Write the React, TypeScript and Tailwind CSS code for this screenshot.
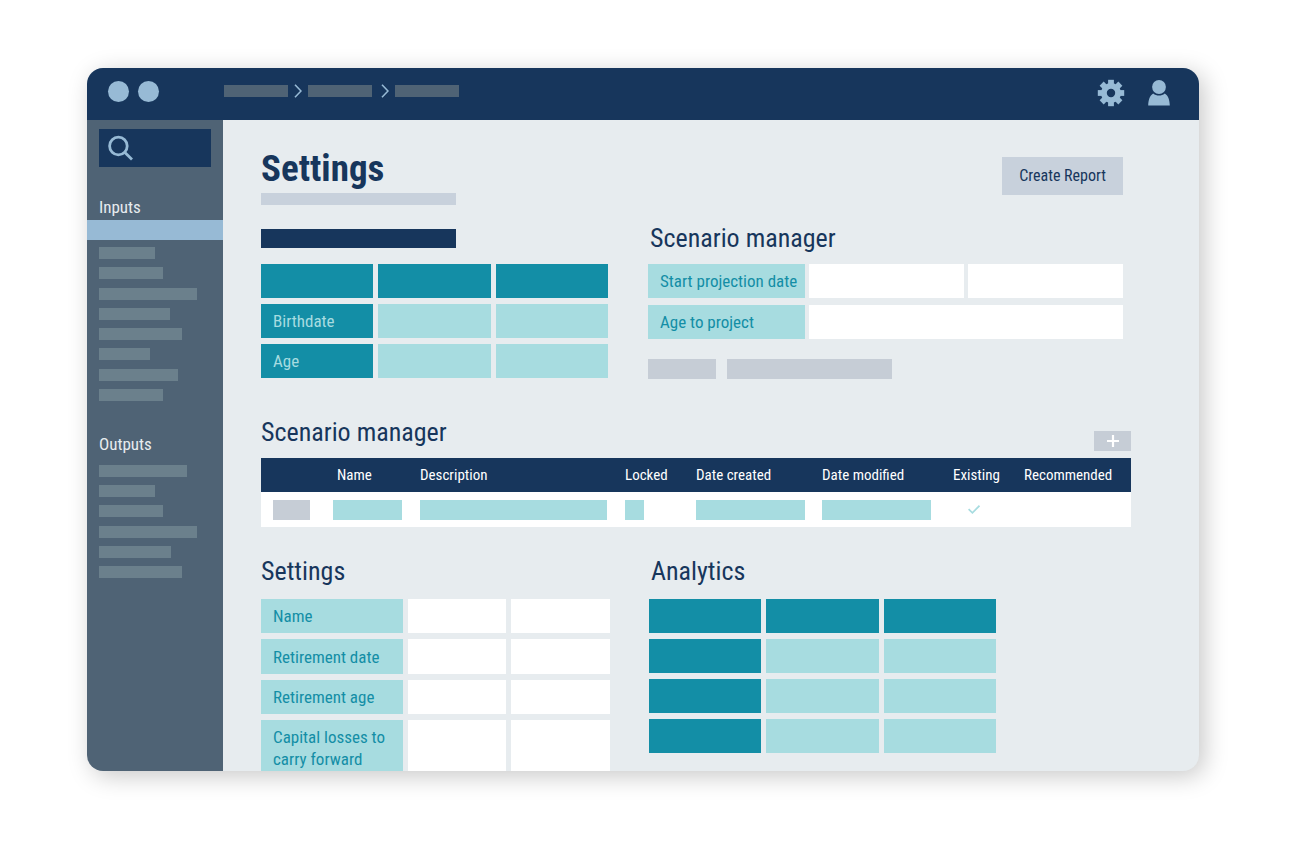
import { useState } from 'react';
import clsx from 'clsx';

const inputLinks = [
  { name: 'Assets', width: 'w-14' },
  { name: 'Income', width: 'w-16' },
  { name: 'Contributions', width: 'w-[98px]' },
  { name: 'Expenses', width: 'w-[71px]' },
  { name: 'Liabilities', width: 'w-[83px]' },
  { name: 'Taxes', width: 'w-[51px]' },
  { name: 'Insurance', width: 'w-[79px]' },
  { name: 'Estate', width: 'w-16' },
];

const outputLinks = [
  { name: 'Net worth', width: 'w-[88px]' },
  { name: 'Cash', width: 'w-14' },
  { name: 'Growth', width: 'w-16' },
  { name: 'Projections', width: 'w-[98px]' },
  { name: 'Savings', width: 'w-[72px]' },
  { name: 'Summary', width: 'w-[83px]' },
];

const scenarioColumns = [
  { title: '', col: 'w-[72px]', bar: 'ml-3 w-[37px] bg-[#c6cdd6]' },
  { title: 'Name', col: 'w-[87px]', bar: 'w-[69px] bg-[#a7dce0]' },
  { title: 'Description', col: 'w-[205px]', bar: 'w-[187px] bg-[#a7dce0]' },
  { title: 'Locked', col: 'w-[71px]', bar: 'w-[19px] bg-[#a7dce0]' },
  { title: 'Date created', col: 'w-[126px]', bar: 'w-[109px] bg-[#a7dce0]' },
  { title: 'Date modified', col: 'w-[131px]', bar: 'w-[109px] bg-[#a7dce0]' },
  { title: 'Existing', col: 'w-[71px]', check: true },
  { title: 'Recommended', col: 'w-[107px]' },
];

const settingsFields = [
  { id: 'name', label: 'Name' },
  { id: 'retirement-date', label: 'Retirement date' },
  { id: 'retirement-age', label: 'Retirement age' },
  { id: 'capital-losses', label: 'Capital losses to carry forward' },
];

function GearIcon() {
  return (
    <svg viewBox="0 0 28 28" className="size-7" fill="#97bad5" aria-hidden="true">
      <path
        fillRule="evenodd"
        d="M14 4a10 10 0 1 0 0 20a10 10 0 0 0 0-20zM14 9.8a4.2 4.2 0 1 1 0 8.4a4.2 4.2 0 0 1 0-8.4z"
      />
      {[0, 45, 90, 135, 180, 225, 270, 315].map((angle) => (
        <rect key={angle} x="11.1" y="0.8" width="5.8" height="5" transform={`rotate(${angle} 14 14)`} />
      ))}
    </svg>
  );
}

function UserIcon() {
  return (
    <svg viewBox="0 0 22 26" className="h-[26px] w-[22px]" fill="#97bad5" aria-hidden="true">
      <circle cx="11" cy="7" r="6.9" />
      <path d="M5.2 13.4C7 15 8.800 15.400 11 15.400s4-.4 5.800-2C20.300 15.600 21.700 20 21.800 25.400H.2C.3 20 1.700 15.600 5.200 13.400z" />
    </svg>
  );
}

function Chevron({ className }: { className: string }) {
  return (
    <svg viewBox="0 0 8 14" className={clsx('h-3.5 w-2', className)} fill="none" stroke="#97bad5" strokeWidth="1.6" aria-hidden="true">
      <path d="M1 0.8L7 7L1 13.2" />
    </svg>
  );
}

function LinkList({ links, className }: { links: typeof inputLinks; className: string }) {
  return (
    <ul className={clsx('flex flex-col justify-between pl-3', className)}>
      {links.map((link) => (
        <li key={link.name}>
          <a href="#" aria-label={link.name} className={clsx('block h-3 bg-[#6b808c]', link.width)} />
        </li>
      ))}
    </ul>
  );
}

function BlockTable({ rows }: { rows: string[] }) {
  return (
    <div className="-mx-[5px] -my-1.5">
      <table className="w-full table-fixed border-separate border-spacing-x-[5px] border-spacing-y-1.5 text-left text-[17px] leading-5">
        <thead>
          <tr>
            {[0, 1, 2].map((i) => (
              <th key={i} className="h-[34px] bg-[#138ea6] p-0" />
            ))}
          </tr>
        </thead>
        <tbody>
          {rows.map((label, i) => (
            <tr key={i}>
              <th className="h-[34px] bg-[#138ea6] py-0 pr-0 pl-3 font-normal text-[#a7dce0]">{label}</th>
              <td className="bg-[#a7dce0] p-0" />
              <td className="bg-[#a7dce0] p-0" />
            </tr>
          ))}
        </tbody>
      </table>
    </div>
  );
}

const labelStyle = 'flex items-center bg-[#a7dce0] pl-3 text-[17px] leading-[22px] text-[#138ea6]';
const inputStyle = 'w-full min-w-0 bg-white px-2 text-[17px] text-[#17365c] outline-none';
const headingStyle = 'text-[26px] leading-8 text-[#17365c]';

export default function App() {
  const [query, setQuery] = useState('');

  return (
    <div className="h-screen bg-white pt-[68px] pr-[102px] pb-20 pl-[87px] font-['Roboto_Condensed',Roboto,sans-serif]">
      <div className="flex h-full flex-col overflow-hidden rounded-2xl bg-[#e7ecef] shadow-[5px_5px_24px_rgba(0,0,0,0.22)]">
        {/* Title bar */}
        <header className="flex h-[52px] shrink-0 justify-between bg-[#17365c] pr-[29px] pl-[21px]">
          <div className="flex items-center pb-1.5">
            <div className="flex w-[116px] gap-[9px]">
              <span className="size-[21px] rounded-full bg-[#97bad5]" />
              <span className="size-[21px] rounded-full bg-[#97bad5]" />
            </div>
            <nav aria-label="Breadcrumb" className="flex items-center">
              <a href="#" aria-label="Home" className="h-3 w-16 bg-[#4f6375]" />
              <Chevron className="mx-1.5" />
              <a href="#" aria-label="Client" className="h-3 w-16 bg-[#4f6375]" />
              <Chevron className="mr-1.5 ml-[9px]" />
              <a href="#" aria-label="Settings" className="h-3 w-16 bg-[#4f6375]" />
            </nav>
          </div>
          <div className="flex items-center gap-[23px] pb-0.5">
            <button type="button" aria-label="Preferences">
              <GearIcon />
            </button>
            <button type="button" aria-label="Account">
              <UserIcon />
            </button>
          </div>
        </header>

        <div className="flex min-h-0 flex-1">
          {/* Sidebar */}
          <aside className="w-[136px] shrink-0 bg-[#4f6375] pt-[9px] text-[17px] leading-6 text-[#e7ecef]">
            <label className="mx-3 flex h-[38px] items-center bg-[#17365c] pl-2">
              <svg viewBox="0 0 26 26" className="size-[26px] shrink-0" fill="none" stroke="#97bad5" strokeWidth="2.8" aria-hidden="true">
                <circle cx="11.4" cy="11" r="8.8" />
                <path d="M17.4 17L25 24.4" />
              </svg>
              <input
                type="search"
                aria-label="Search"
                value={query}
                onChange={(e) => setQuery(e.target.value)}
                className="w-full min-w-0 bg-transparent px-2 text-sm outline-none"
              />
            </label>
            <h3 className="mt-7 pl-3">Inputs</h3>
            <a href="#" aria-label="Current page" className="mt-px block h-5 bg-[#97bad5]" />
            <LinkList links={inputLinks} className="mt-[7px] h-[154px]" />
            <h3 className="mt-[31px] pl-3">Outputs</h3>
            <LinkList links={outputLinks} className="mt-[9px] h-[113px]" />
          </aside>

          <main className="min-w-0 flex-1 overflow-hidden pt-7 pr-[68px] pl-[38px]">
            <div className="flex items-start justify-between pr-2">
              <div>
                <h1 className="pb-1 text-[37px] leading-[41px] font-bold text-[#17365c]">Settings</h1>
                <div className="h-3 w-[195px] bg-[#c8d1dc]" />
              </div>
              <button type="button" className="mt-[9px] h-[38px] bg-[#c8d1dc] px-[17px] text-base text-[#17365c]">
                Create Report
              </button>
            </div>

            <div className="mt-[17px] grid grid-cols-[347fr_475fr] gap-x-10 pr-2">
              <section className="pt-[7px]">
                <div className="mb-4 h-[19px] w-[195px] bg-[#17365c]" />
                <BlockTable rows={['Birthdate', 'Age']} />
              </section>

              <section>
                <h2 className={clsx(headingStyle, 'mb-[10px] pl-0.5')}>Scenario manager</h2>
                <div className="grid grid-cols-[157fr_155fr_155fr] gap-x-1 gap-y-[7px]">
                  <label htmlFor="start-date" className={clsx(labelStyle, 'h-[34px]')}>
                    Start projection date
                  </label>
                  <input id="start-date" className={inputStyle} />
                  <input aria-label="Start projection date, alternate" className={inputStyle} />
                  <label htmlFor="project-age" className={clsx(labelStyle, 'h-[34px]')}>
                    Age to project
                  </label>
                  <input id="project-age" className={clsx(inputStyle, 'col-span-2')} />
                </div>
                <div className="mt-5 flex gap-[11px]">
                  <button type="button" aria-label="Apply" className="h-5 w-[68px] bg-[#c6cdd6]" />
                  <button type="button" aria-label="Restore defaults" className="h-5 w-[165px] bg-[#c6cdd6]" />
                </div>
              </section>
            </div>

            <section className="mt-[37px]">
              <div className="flex items-start justify-between pb-[7px]">
                <h2 className={headingStyle}>Scenario manager</h2>
                <button type="button" aria-label="Add scenario" className="mt-[15px] flex h-5 w-[37px] items-center justify-center bg-[#c6cdd6]">
                  <svg viewBox="0 0 12 12" className="size-3" stroke="#fff" strokeWidth="2.2" aria-hidden="true">
                    <path d="M6 0v12M0 6h12" />
                  </svg>
                </button>
              </div>
              <table className="w-full table-fixed bg-white text-left">
                <colgroup>
                  {scenarioColumns.map((column) => (
                    <col key={column.title} className={column.col} />
                  ))}
                </colgroup>
                <thead className="h-[34px] bg-[#17365c] text-[15px] leading-5 text-white">
                  <tr>
                    {scenarioColumns.map((column) => (
                      <th key={column.title} className={clsx('p-0 font-normal', column.title === 'Name' && 'pl-1')}>
                        {column.title}
                      </th>
                    ))}
                  </tr>
                </thead>
                <tbody>
                  <tr className="h-[35px]">
                    {scenarioColumns.map((column) => (
                      <td key={column.title} className="p-0">
                        {column.bar && <div className={clsx('h-5', column.bar)} />}
                        {column.check && (
                          <svg viewBox="0 0 12 9" className="ml-[15px] h-[9px] w-3" fill="none" stroke="#a7dce0" strokeWidth="1.7" role="img" aria-label="Yes">
                            <path d="M0.6 4.2L4.4 7.8L11.5 0.7" />
                          </svg>
                        )}
                      </td>
                    ))}
                  </tr>
                </tbody>
              </table>
            </section>

            <div className="mt-7 grid grid-cols-[349fr_347fr] gap-x-[39px] pr-[135px]">
              <section>
                <h2 className={clsx(headingStyle, 'mb-3')}>Settings</h2>
                <div className="grid grid-cols-[142fr_99fr_99fr] grid-rows-[34px_35px_34px_56px] gap-x-[5px] gap-y-1.5">
                  {settingsFields.map((field) => (
                    <div key={field.id} className="contents">
                      <label htmlFor={field.id} className={labelStyle}>
                        {field.label}
                      </label>
                      <input id={field.id} className={inputStyle} />
                      <input aria-label={`${field.label}, alternate`} className={inputStyle} />
                    </div>
                  ))}
                </div>
              </section>

              <section>
                <h2 className={clsx(headingStyle, 'mb-3 pl-0.5')}>Analytics</h2>
                <BlockTable rows={['', '', '']} />
              </section>
            </div>
          </main>
        </div>
      </div>
    </div>
  );
}
